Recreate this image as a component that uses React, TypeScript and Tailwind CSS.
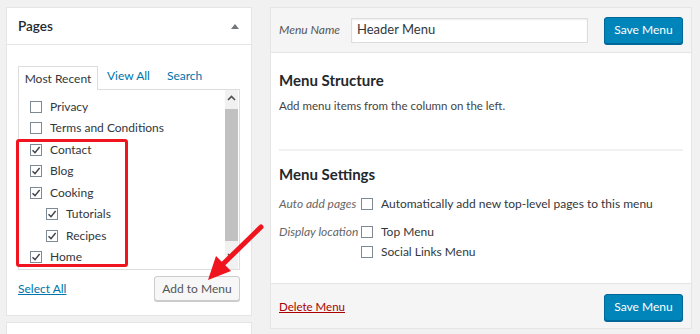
import React from 'react';

const font = { fontFamily: 'Lato, "Open Sans", Arial, sans-serif' };

const Check: React.FC<{ checked?: boolean }> = ({ checked }) => (
  <span className="flex h-[12px] w-[12px] shrink-0 items-center justify-center border border-[#7e8993] bg-white">
    {checked && (
      <svg width="10" height="10" viewBox="0 0 10 10">
        <path d="M1.5 5.2 L4 7.6 L8.6 2" fill="none" stroke="#3c434a" strokeWidth="1.4" />
      </svg>
    )}
  </span>
);

const pages = [
  { label: 'Privacy', checked: false, indent: false },
  { label: 'Terms and Conditions', checked: false, indent: false },
  { label: 'Contact', checked: true, indent: false },
  { label: 'Blog', checked: true, indent: false },
  { label: 'Cooking', checked: true, indent: false },
  { label: 'Tutorials', checked: true, indent: true },
  { label: 'Recipes', checked: true, indent: true },
  { label: 'Home', checked: true, indent: false },
];

const Triangle = () => (
  <svg width="10" height="6" viewBox="0 0 10 6">
    <path d="M1 6 L5 1 L9 6 Z" fill="#72777c" />
  </svg>
);

const PagesBox: React.FC = () => (
  <div className="h-[309px] shrink-0 border border-[#e5e5e5] bg-white">
    <div className="flex h-[37px] items-center justify-between border-b border-[#e5e5e5] pl-[11px] pr-[11px]">
      <span className="text-[13.5px] font-semibold text-[#23282d]">Pages</span>
      <Triangle />
    </div>
    <div className="px-[11px] pt-[21px]">
      <div className="flex items-end whitespace-nowrap text-[12px]">
        <div className="relative z-10 -mb-px flex h-[24px] w-[80px] items-center justify-center border border-b-0 border-[#ddd] bg-white text-[#32373c]">
          Most Recent
        </div>
        <span className="ml-[9px] pb-[4px] text-[#0073aa]">View All</span>
        <span className="ml-[17px] pb-[4px] text-[#0073aa]">Search</span>
      </div>
      <div className="flex h-[181px] border border-[#ddd] bg-white">
        <div className="flex-1 pt-[6px] pl-[11px]">
          {pages.map((p) => (
            <div key={p.label} className={`flex h-[21.5px] items-center gap-[8px] whitespace-nowrap ${p.indent ? 'pl-[16px]' : ''}`}>
              <Check checked={p.checked} />
              <span className="text-[12px] text-[#32373c]">{p.label}</span>
            </div>
          ))}
        </div>
        <div className="mr-[1px] flex w-[13px] flex-col items-center bg-[#f1f1f1]">
          <svg className="mt-[5px]" width="9" height="6" viewBox="0 0 9 6">
            <path d="M1 5 L4.5 1.5 L8 5" fill="none" stroke="#505050" strokeWidth="1.6" />
          </svg>
          <div className="mt-[8px] h-[132px] w-full bg-[#c1c1c1]" />
          <svg className="mt-[12px]" width="9" height="6" viewBox="0 0 9 6">
            <path d="M1 1 L4.5 4.5 L8 1" fill="none" stroke="#505050" strokeWidth="1.6" />
          </svg>
        </div>
      </div>
      <div className="mt-[6px] flex items-center justify-between">
        <span className="text-[12px] text-[#0073aa] underline">Select All</span>
        <button className="h-[25px] w-[86px] rounded-[3px] border border-[#ccc] bg-[#f7f7f7] text-[12px] text-[#555] shadow-[0_1px_0_#ccc]">
          Add to Menu
        </button>
      </div>
    </div>
  </div>
);

const SaveButton = () => (
  <button className="h-[27px] w-[79px] rounded-[3px] border border-[#006799] bg-[#0085ba] text-[12px] text-white shadow-[0_1px_0_#006799]">
    Save Menu
  </button>
);

const MenuEditor: React.FC = () => (
  <div className="flex h-[322px] w-[422px] shrink-0 flex-col border border-[#e5e5e5] bg-white">
    <div className="flex h-[45px] items-center border-b border-[#e5e5e5] bg-[#f5f5f5] pl-[8px] pr-[8px]">
      <span className="w-[72px] whitespace-nowrap text-[12px] italic text-[#555]">Menu Name</span>
      <div className="flex h-[25px] w-[237px] items-center border border-[#ddd] bg-white pl-[5px] text-[13px] text-[#32373c] shadow-[inset_0_1px_2px_rgba(0,0,0,0.07)]">
        Header Menu
      </div>
      <div className="ml-auto">
        <SaveButton />
      </div>
    </div>
    <div className="flex-1 px-[8px]">
      <div className="pt-[16px] text-[15px] font-bold text-[#23282d]">Menu Structure</div>
      <div className="mt-[5px] text-[11.5px] text-[#444]">Add menu items from the column on the left.</div>
      <div className="mt-[35px] h-[2px] bg-[#f1f1f1]" />
      <div className="pt-[12px] text-[15px] font-bold text-[#23282d]">Menu Settings</div>
      <div className="mt-[9px] flex h-[20px] items-center whitespace-nowrap text-[12px]">
        <span className="w-[82px] text-[12px] italic text-[#666]">Auto add pages</span>
        <Check />
        <span className="ml-[8px] text-[#32373c]">Automatically add new top-level pages to this menu</span>
      </div>
      <div className="mt-[8px] flex h-[20px] items-center whitespace-nowrap text-[12px]">
        <span className="w-[82px] text-[12px] italic text-[#666]">Display location</span>
        <Check />
        <span className="ml-[8px] text-[#32373c]">Top Menu</span>
      </div>
      <div className="flex h-[20px] items-center whitespace-nowrap pl-[82px] text-[12px]">
        <Check />
        <span className="ml-[8px] text-[#32373c]">Social Links Menu</span>
      </div>
    </div>
    <div className="flex h-[45px] items-center justify-between border-t border-[#e5e5e5] bg-[#f5f5f5] pl-[8px] pr-[8px] pt-[2px]">
      <span className="text-[11.5px] text-[#a00] underline">Delete Menu</span>
      <SaveButton />
    </div>
  </div>
);

const App: React.FC = () => {
  return (
    <div className="relative h-[334px] w-[700px] overflow-hidden bg-[#f1f1f1]" style={font}>
      <div className="flex gap-[18px] pl-[6px] pt-[7px]">
        <div className="flex w-[246px] shrink-0 flex-col gap-[6px]">
          <PagesBox />
          <div className="h-[40px] border border-[#e5e5e5] bg-white">
            <div className="flex items-center justify-between px-[11px] pt-[9px]">
              <span className="text-[13.5px] font-semibold text-[#23282d]">Posts</span>
              <Triangle />
            </div>
          </div>
        </div>
        <MenuEditor />
      </div>

      {/* highlight around the checked pages */}
      <div className="pointer-events-none absolute left-[16px] top-[139px] h-[128px] w-[112px] rounded-[3px] border-[3px] border-[#f0141e]" />

      {/* arrow pointing at the button */}
      <svg className="pointer-events-none absolute left-0 top-0" width="700" height="334">
        <line x1="261" y1="227" x2="223" y2="264" stroke="#f0141e" strokeWidth="5" strokeLinecap="round" />
        <path d="M208 280 L231 271 L216 256 Z" fill="#f0141e" />
      </svg>
    </div>
  );
};

export default App;
